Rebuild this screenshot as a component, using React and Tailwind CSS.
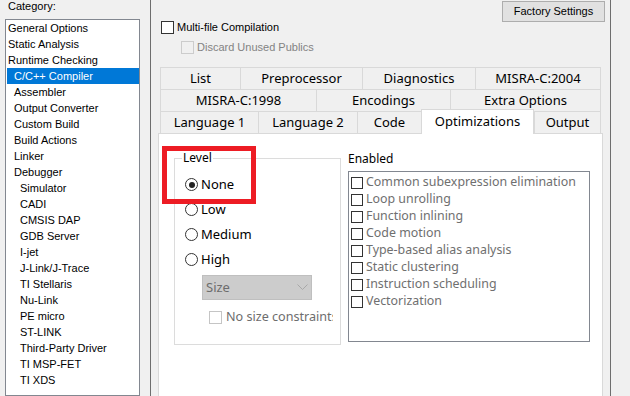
import React from 'react';

// Category tree on the left; level = indent step
const CATEGORIES = [
  ['General Options', 0],
  ['Static Analysis', 0],
  ['Runtime Checking', 0],
  ['C/C++ Compiler', 1, true],
  ['Assembler', 1],
  ['Output Converter', 1],
  ['Custom Build', 1],
  ['Build Actions', 1],
  ['Linker', 1],
  ['Debugger', 1],
  ['Simulator', 2],
  ['CADI', 2],
  ['CMSIS DAP', 2],
  ['GDB Server', 2],
  ['I-jet', 2],
  ['J-Link/J-Trace', 2],
  ['TI Stellaris', 2],
  ['Nu-Link', 2],
  ['PE micro', 2],
  ['ST-LINK', 2],
  ['Third-Party Driver', 2],
  ['TI MSP-FET', 2],
  ['TI XDS', 2],
];

const INDENT = ['pl-[1px]', 'pl-[7px]', 'pl-[13px]'];

const TAB_ROWS = [
  [['List', 'w-[80px]'], ['Preprocessor', 'w-[122px]'], ['Diagnostics', 'w-[113px]'], ['MISRA-C:2004', 'flex-1']],
  [['MISRA-C:1998', 'w-[156px]'], ['Encodings', 'w-[134px]'], ['Extra Options', 'flex-1']],
  [['Language 1', 'w-[98px]'], ['Language 2', 'w-[99px]'], ['Code', 'w-[64px]'], ['Optimizations', 'w-[113px]', true], ['Output', 'flex-1']],
];

const OPTIMIZATIONS = [
  'Common subexpression elimination',
  'Loop unrolling',
  'Function inlining',
  'Code motion',
  'Type-based alias analysis',
  'Static clustering',
  'Instruction scheduling',
  'Vectorization',
];

const SMALL = "font-['Liberation_Sans',Arial,sans-serif] text-[11px]";

function Radio({ label, checked }) {
  return (
    <div className="h-[25px] flex items-center pl-[10px] gap-[3px]">
      <span className="w-[13px] h-[13px] rounded-full border border-[#333] bg-white flex items-center justify-center">
        {checked && <span className="w-[6px] h-[6px] rounded-full bg-[#222]" />}
      </span>
      <span className="text-[13px] text-black leading-none">{label}</span>
    </div>
  );
}

export default function App() {
  return (
    <div className="w-[630px] h-[396px] bg-[#f0f0f0] flex overflow-hidden relative font-['Noto_Sans',sans-serif] text-black">
      {/* left: category list */}
      <div className="w-[151px] h-full border-r border-[#6e6e6e] flex flex-col shrink-0">
        <div className={`${SMALL} leading-none pl-[8px] pt-[1px] h-[19px]`}>Category:</div>
        <div className={`ml-[5px] w-[135px] flex-1 bg-white border border-[#828790] ${SMALL}`}>
          {CATEGORIES.map(([name, level, sel]) => (
            <div
              key={name}
              className={`h-[16px] leading-[16px] ml-[1px] whitespace-nowrap ${INDENT[level]} ${sel ? 'bg-[#0078d7] text-white' : ''}`}
            >
              {name}
            </div>
          ))}
        </div>
      </div>

      {/* middle: compiler options */}
      <div className="w-[460px] h-full border-r border-[#6e6e6e] flex flex-col shrink-0">
        <div className="flex justify-end pt-[1px] pr-[5px]">
          <button className={`w-[103px] h-[21px] border border-[#adadad] bg-[#e1e1e1] leading-none ${SMALL}`}>
            Factory Settings
          </button>
        </div>
        <div className="flex items-center h-[14px] -mt-[2px] pl-[10px] gap-[3px]">
          <span className="w-[13px] h-[13px] border border-[#333] bg-white" />
          <span className={`${SMALL} leading-none`}>Multi-file Compilation</span>
        </div>
        <div className="flex items-center h-[14px] mt-[6px] pl-[30px] gap-[3px]">
          <span className="w-[13px] h-[13px] border border-[#cccccc] bg-[#f0f0f0]" />
          <span className={`${SMALL} leading-none text-[#838383]`}>Discard Unused Publics</span>
        </div>

        {/* tabs */}
        <div className="ml-[9px] w-[441px] mt-[13px] flex flex-col text-[13px]">
          {TAB_ROWS.map((row, i) => (
            <div key={i} className="flex h-[22px]">
              {row.map(([label, w, sel], j) => (
                <div
                  key={label}
                  className={`${w} flex items-center justify-center border-t border-l border-[#d9d9d9] ${j === row.length - 1 ? 'border-r' : ''} ${sel ? 'bg-white -mt-[2px] h-[25px] relative z-10 border-r items-start pt-[2px]' : 'pt-[1px]'}`}
                >
                  {label}
                </div>
              ))}
            </div>
          ))}
        </div>

        {/* tab content */}
        <div className="ml-[7px] w-[445px] flex-1 bg-white border border-b-0 border-[#d9d9d9] flex">
          <div className="ml-[15px] mt-[24px] w-[167px] h-[187px] border border-[#dcdcdc] relative shrink-0">
            <span className="absolute -top-[9px] left-[7px] bg-white px-[1px] text-[12px] leading-[16px]">Level</span>
            <div className="mt-[13px]">
              <Radio label="None" checked />
              <Radio label="Low" />
              <Radio label="Medium" />
              <Radio label="High" />
            </div>
            <div className="ml-[27px] mt-[3px] w-[110px] h-[25px] bg-[#cccccc] border border-[#bfbfbf] flex items-center justify-between px-[3px] text-[13px] text-[#6d6d6d]">
              <span>Size</span>
              <svg width="11" height="7" viewBox="0 0 11 7" fill="none" stroke="#a8a8a8" strokeWidth="1">
                <path d="M0.5 0.5 5.5 5.5 10.5 0.5" />
              </svg>
            </div>
            <div className="ml-[34px] mt-[9px] w-[124px] overflow-hidden whitespace-nowrap flex items-center gap-[4px] h-[16px]">
              <span className="w-[13px] h-[13px] border border-[#c5c5c5] bg-white shrink-0" />
              <span className="text-[12.6px] leading-none text-[#6d6d6d]">No size constraints</span>
            </div>
          </div>

          <div className="ml-[7px] flex flex-col">
            <div className="mt-[17px] h-[20px] text-[12px] leading-[16px]">Enabled</div>
            <div className="w-[242px] h-[171px] border border-[#828790] bg-white pt-[2px]">
              {OPTIMIZATIONS.map((o) => (
                <div key={o} className="h-[17px] flex items-center pl-[2px] gap-[3px] whitespace-nowrap">
                  <span className="w-[12px] h-[12px] border border-[#333] shrink-0" />
                  <span className="text-[12.4px] leading-none text-[#6f6f6f]">{o}</span>
                </div>
              ))}
            </div>
          </div>
        </div>
      </div>

      {/* annotation */}
      <div className="absolute left-[162px] top-[146px] w-[94px] h-[58px] border-[5px] border-[#ed1c24] pointer-events-none" />
    </div>
  );
}
